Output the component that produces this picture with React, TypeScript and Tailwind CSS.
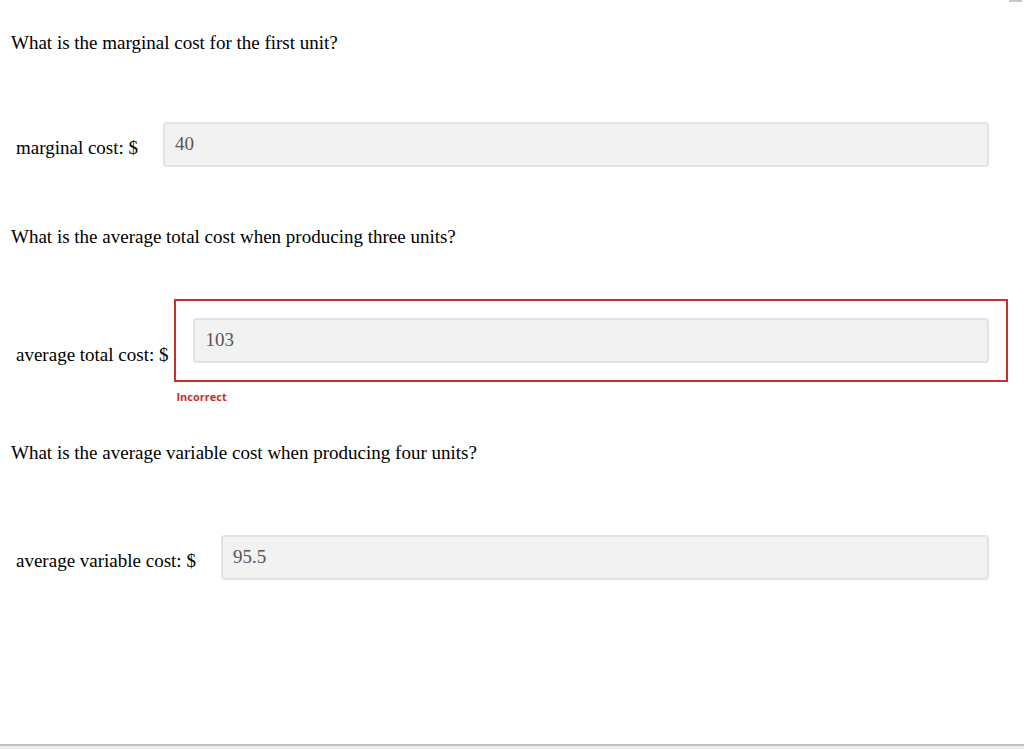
import React from "react";

const serif = { fontFamily: '"Liberation Serif", "Times New Roman", serif' };

function Field({ value, error }: { value: string; error?: boolean }) {
  return (
    <div className="flex-1 flex flex-col">
      <div
        className={
          "border-2 p-[17px] " + (error ? "border-[#c9302c]" : "border-transparent")
        }
      >
        <div className="h-[45px] rounded-[4px] border-2 border-[#e3e3e3] bg-[#f2f2f2] pl-[10px] flex items-center text-[19px] text-[#555555]">
          {value}
        </div>
      </div>
      {error && (
        <div
          className="mt-[8px] pl-[2px] leading-[14px] text-[11px] font-bold text-[#c9302c]"
          style={{ fontFamily: '"Open Sans", "Liberation Sans", sans-serif' }}
        >
          Incorrect
        </div>
      )}
    </div>
  );
}

function Row({ label, value, error }: { label: string; value: string; error?: boolean }) {
  return (
    <div className="flex items-center pl-[5px]">
      <div className="pt-[6px] pr-[6px] text-[19px] leading-[20px] text-black whitespace-nowrap">
        {label}
      </div>
      <Field value={value} error={error} />
    </div>
  );
}

export default function App() {
  return (
    <div className="relative w-[1024px] h-[749px] bg-white flex flex-col overflow-hidden" style={serif}>
      <div className="absolute top-0 right-[2px] w-[13px] h-[2px] bg-[#c8c8c8]" />
      <div className="flex-1 pl-[11px] pr-[16px] text-black">
        <div className="mt-[33px] text-[19px] leading-[20px]">What is the marginal cost for the first unit?</div>
        <div className="mt-[50px]">
          <Row label="marginal cost: $" value="40" />
        </div>
        <div className="mt-[41px] text-[19px] leading-[20px]">What is the average total cost when producing three units?</div>
        <div className="mt-[52px]">
          <Row label="average total cost: $" value="103" error />
        </div>
        <div className="mt-[39px] text-[19px] leading-[20px]">What is the average variable cost when producing four units?</div>
        <div className="mt-[53px]">
          <Row label="average variable cost: $" value="95.5" />
        </div>
      </div>
      <div className="h-[2px] bg-[#c2c2c2]" />
      <div className="h-[3px] bg-[#ececec]" />
    </div>
  );
}
